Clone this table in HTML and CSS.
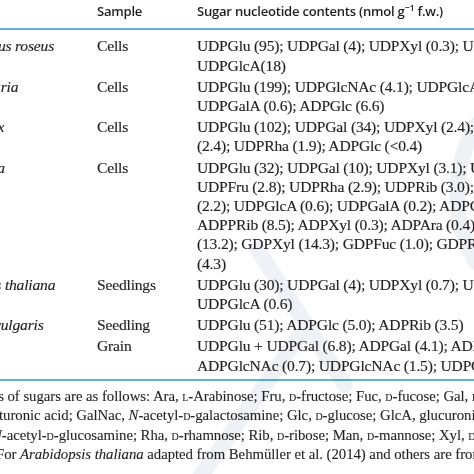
FILE: index.html
```html
<!DOCTYPE html>
<html lang="en">
<head>
<meta charset="utf-8">
<title>Sugar nucleotide contents</title>
<link rel="stylesheet" href="styles.css">
</head>
<body>
<div class="page">
  <div class="table">
    <div class="row head">
      <div class="c1">Species</div>
      <div class="c2">Sample</div>
      <div class="c3">Sugar nucleotide contents (nmol g<sup>−1</sup> f.w.)</div>
    </div>
    <div class="tbody">
      <div class="row">
        <div class="c1">Catharanthus roseus</div>
        <div class="c2">Cells</div>
        <div class="c3">UDPGlu (95); UDPGal (4); UDPXyl (0.3); UDPAra (1.2);<br>UDPGlcA(18)</div>
      </div>
      <div class="row">
        <div class="c1">Nepeta cataria</div>
        <div class="c2">Cells</div>
        <div class="c3">UDPGlu (199); UDPGlcNAc (4.1); UDPGlcA (2.0);<br>UDPGalA (0.6); ADPGlc (6.6)</div>
      </div>
      <div class="row">
        <div class="c1">Glycine max</div>
        <div class="c2">Cells</div>
        <div class="c3">UDPGlu (102); UDPGal (34); UDPXyl (2.4); UDPAra<br>(2.4); UDPRha (1.9); ADPGlc (&lt;0.4)</div>
      </div>
      <div class="row">
        <div class="c1">Oryza sativa</div>
        <div class="c2">Cells</div>
        <div class="c3">UDPGlu (32); UDPGal (10); UDPXyl (3.1); UDPAra (1.4);<br>UDPFru (2.8); UDPRha (2.9); UDPRib (3.0); UDPGalNAc<br>(2.2); UDPGlcA (0.6); UDPGalA (0.2); ADPGlc (9.4);<br>ADPPRib (8.5); ADPXyl (0.3); ADPAra (0.4); GDPMan<br>(13.2); GDPXyl (14.3); GDPFuc (1.0); GDPRha<br>(4.3)</div>
      </div>
      <div class="row">
        <div class="c1">Arabidopsis thaliana</div>
        <div class="c2">Seedlings</div>
        <div class="c3">UDPGlu (30); UDPGal (4); UDPXyl (0.7); UDPAra (0.5);<br>UDPGlcA (0.6)</div>
      </div>
      <div class="row">
        <div class="c1">Phaseolus vulgaris</div>
        <div class="c2">Seedling</div>
        <div class="c3">UDPGlu (51); ADPGlc (5.0); ADPRib (3.5)</div>
      </div>
      <div class="row">
        <div class="c1"></div>
        <div class="c2">Grain</div>
        <div class="c3">UDPGlu + UDPGal (6.8); ADPGal (4.1); ADPMan (2.3);<br>ADPGlcNAc (0.7); UDPGlcNAc (1.5); UDPGalNAc (0.9)</div>
      </div>
    </div>
  </div>
  <div class="foot">
    <div class="fn-first">Full names of sugars are as follows: Ara, <span class="sc">l</span>-Arabinose; Fru, <span class="sc">d</span>-fructose; Fuc, <span class="sc">d</span>-fucose; Gal, <span class="sc">d</span>-galac-</div>
    <div class="fn-second">turonic acid; GalNac, <i>N</i>-acetyl-<span class="sc">d</span>-galactosamine; Glc, <span class="sc">d</span>-glucose; GlcA, glucuronic acid; GlcNAc,</div>
    <div><i>N</i>-acetyl-<span class="sc">d</span>-glucosamine; Rha, <span class="sc">d</span>-rhamnose; Rib, <span class="sc">d</span>-ribose; Man, <span class="sc">d</span>-mannose; Xyl, <span class="sc">d</span>-xylose.</div>
    <div class="fn-fourth">For <i>Arabidopsis thaliana</i> adapted from Behmüller et al. (2014) and others are from</div>
  </div>
</div>
<svg class="watermark" width="474" height="474" viewBox="0 0 474 474" aria-hidden="true">
  <g fill="none" stroke="#eef2f7" stroke-width="16" stroke-linecap="round">
    <path d="M198 480 L300 335"/>
    <path d="M258 250 L345 385"/>
    <path d="M476 125 Q 438 195 476 262"/>
  </g>
</svg>
</body>
</html>
```

FILE: styles.css
```css
html, body {
  margin: 0;
  padding: 0;
  background: #ffffff;
}

body {
  position: relative;
  width: 474px;
  height: 474px;
  overflow: hidden;
  font-family: "Liberation Serif", "Times New Roman", serif;
  color: #231f20;
}

.page {
  margin-left: -72px;
  width: 780px;
}

.row {
  display: grid;
  grid-template-columns: 169px 100px 1fr;
  white-space: nowrap;
}

.head {
  font-family: "Open Sans", "Liberation Sans", sans-serif;
  font-weight: 600;
  font-size: 13.1px;
  letter-spacing: -0.25px;
  line-height: 18px;
  padding: 2px 0 8px;
  border-bottom: 2px solid #62b1dc;
}

.head sup {
  font-size: 9px;
  line-height: 0;
  vertical-align: 5px;
}

.tbody {
  font-size: 15.6px;
  letter-spacing: -0.2px;
  line-height: 19.2px;
  padding: 5.4px 0 3px;
  border-bottom: 2px solid #62b1dc;
  -webkit-text-stroke: 0.15px #231f20;
}

.tbody .row {
  padding: 1px 0;
}

.tbody .c1 {
  font-style: italic;
}

.foot {
  margin-left: 64px;
  padding-top: 6.3px;
  font-size: 14.8px;
  letter-spacing: -0.05px;
  line-height: 19.3px;
  white-space: nowrap;
  -webkit-text-stroke: 0.1px #231f20;
}

.fn-first {
  text-indent: -53px;
}

.fn-second {
  text-indent: 7px;
}

.fn-fourth {
  text-indent: 4px;
}

.sc {
  font-variant: small-caps;
}

.watermark {
  position: absolute;
  left: 0;
  top: 0;
  pointer-events: none;
  mix-blend-mode: multiply;
}
```
